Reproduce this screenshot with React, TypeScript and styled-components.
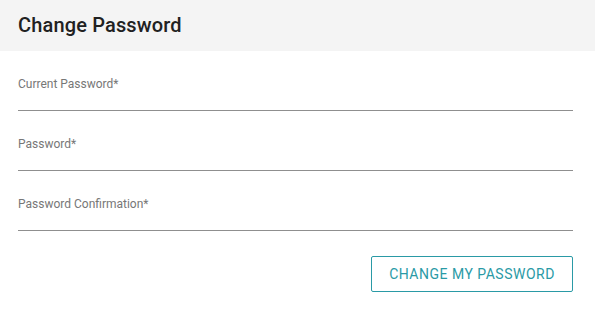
import React from "react";
import styled, { createGlobalStyle } from "styled-components";

const GlobalStyle = createGlobalStyle`
  body {
    margin: 0;
    background: #fff;
    font-family: Roboto, "Liberation Sans", sans-serif;
  }
`;

const Card = styled.div`
  width: 595px;
  background: #fff;
`;

const Header = styled.div`
  height: 51px;
  background: #f4f4f4;
  display: flex;
  align-items: center;
  padding: 0 18px;
  box-sizing: border-box;
`;

const Title = styled.h2`
  margin: 0;
  font-size: 20px;
  font-weight: 500;
  letter-spacing: 0.15px;
  color: #212121;
  padding-bottom: 1px;
`;

const Form = styled.form`
  padding: 0 22px 0 18px;
  display: flex;
  flex-direction: column;
`;

const Field = styled.label`
  display: flex;
  flex-direction: column;
  padding-top: 26px;
  border-bottom: 1px solid #8f8f8f;
`;

const Label = styled.span`
  font-size: 12px;
  line-height: 14px;
  color: #777;
`;

const Input = styled.input`
  height: 19px;
  border: none;
  outline: none;
  padding: 0;
  font: inherit;
  background: transparent;
`;

const Actions = styled.div`
  display: flex;
  justify-content: flex-end;
  margin-top: 25px;
`;

const Button = styled.button`
  width: 202px;
  height: 36px;
  border: 1px solid #2a9aa6;
  border-radius: 2px;
  background: #fff;
  color: #2a9aa6;
  font-family: Roboto, "Liberation Sans", sans-serif;
  font-size: 14px;
  letter-spacing: 0.5px;
  text-transform: uppercase;
  cursor: pointer;
`;

const fields = ["Current Password*", "Password*", "Password Confirmation*"];

const App = () => (
  <>
    <GlobalStyle />
    <Card>
      <Header>
        <Title>Change Password</Title>
      </Header>
      <Form onSubmit={(e) => e.preventDefault()}>
        {fields.map((f) => (
          <Field key={f}>
            <Label>{f}</Label>
            <Input type="password" />
          </Field>
        ))}
        <Actions>
          <Button type="submit">Change my password</Button>
        </Actions>
      </Form>
    </Card>
  </>
);

export default App;
